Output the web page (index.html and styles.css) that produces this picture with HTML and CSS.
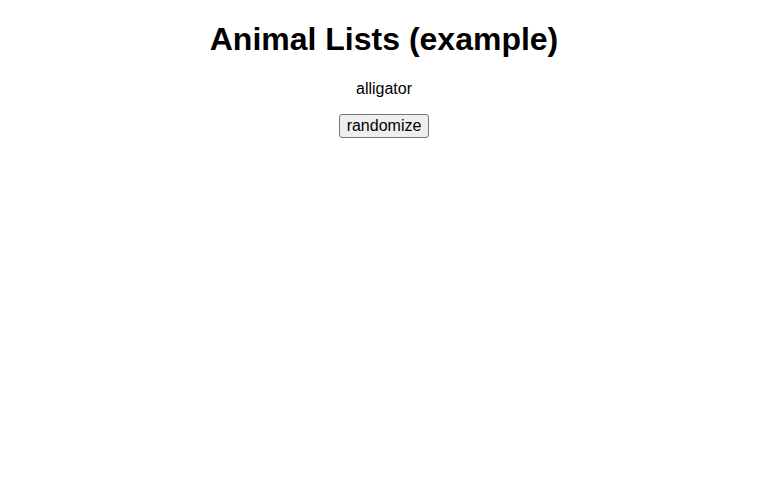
FILE: index.html
```html
<!DOCTYPE html>
<html>
<head>
<meta charset="utf-8">
<link rel="stylesheet" href="styles.css">
</head>
<body class="page">
<h1 class="title">Animal Lists (example)</h1>
<p class="animal">alligator</p>
<button class="btn">randomize</button>
</body>
</html>
```
FILE: styles.css
```css
.page {
  margin: 0;
  padding: 0 8px;
  font-family: "Liberation Sans", Arial, sans-serif;
  text-align: center;
  background: #fff;
  color: #000;
}
.title {
  font-size: 32px;
  font-weight: bold;
  margin: 21.44px 0;
}
.animal {
  font-size: 16px;
  margin: 16px 0;
}
.btn {
  font-family: "Liberation Sans", Arial, sans-serif;
  font-size: 16px;
  padding: 2px 7px;
  border: 1px solid #767676;
  border-radius: 3px;
  background: #efefef;
  color: #000;
}
```
